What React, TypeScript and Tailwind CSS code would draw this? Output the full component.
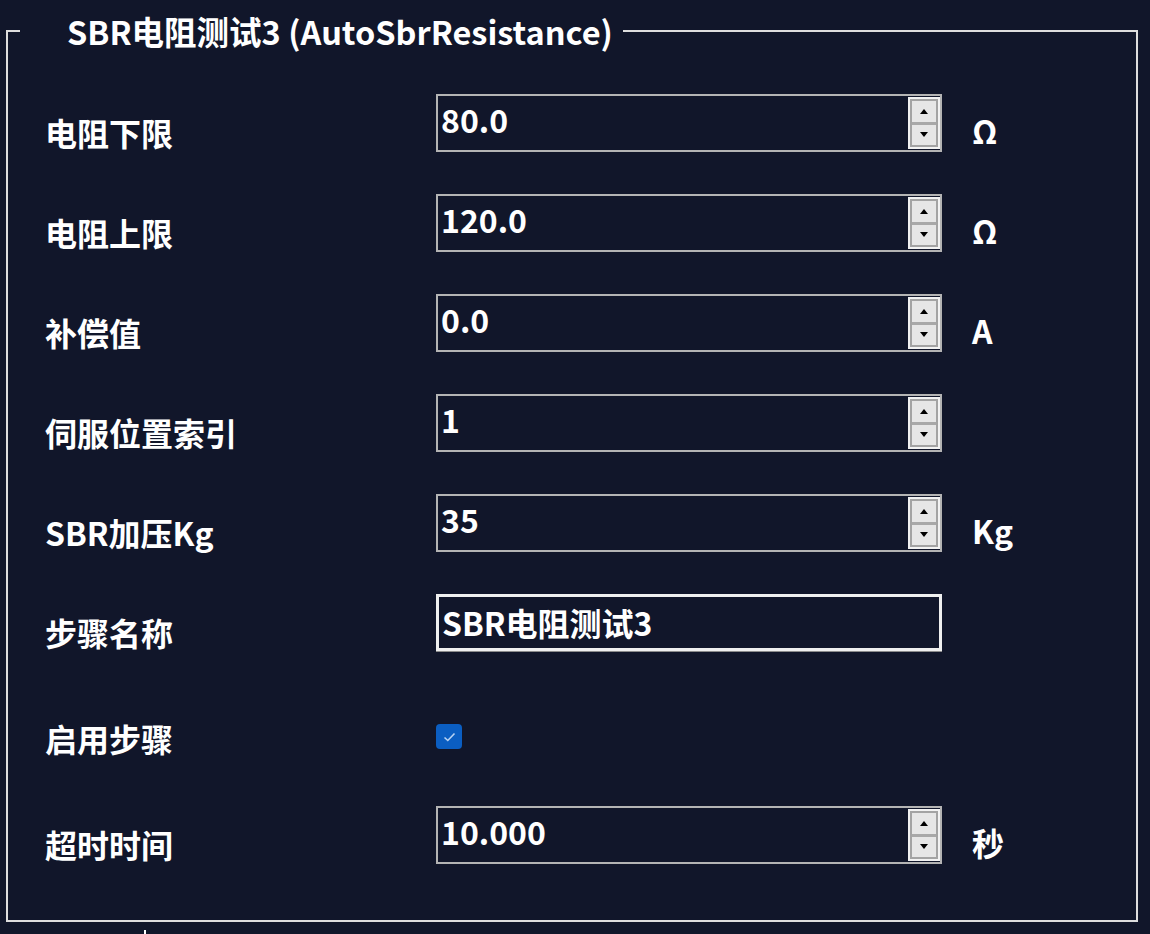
import React from "react";

const FONT = { fontFamily: '"Noto Sans CJK SC", "Noto Sans", sans-serif' };

type SpinRow = { label: string; value: string; unit?: string };

const spinRows: SpinRow[] = [
  { label: "电阻下限", value: "80.0", unit: "Ω" },
  { label: "电阻上限", value: "120.0", unit: "Ω" },
  { label: "补偿值", value: "0.0", unit: "A" },
  { label: "伺服位置索引", value: "1" },
  { label: "SBR加压Kg", value: "35", unit: "Kg" },
];

function SpinButtons() {
  return (
    <div className="my-[1px] w-[32px] shrink-0 border-2 border-[#f2f2f2] flex">
      <div className="flex-1 flex flex-col border-2 border-[#a3a3a3] bg-[#e6e6e6]">
        <div className="flex-1 flex items-center justify-center">
          <div className="w-0 h-0 border-x-[4px] border-x-transparent border-b-[5px] border-b-black" />
        </div>
        <div className="h-[3px] bg-[#a8a8a8]" />
        <div className="flex-1 flex items-center justify-center">
          <div className="w-0 h-0 border-x-[4px] border-x-transparent border-t-[5px] border-t-black" />
        </div>
      </div>
    </div>
  );
}

function SpinBox({ value }: { value: string }) {
  return (
    <div className="w-[506px] h-[58px] border-2 border-[#b4b4b4] flex">
      <div className="flex-1 pl-[3px] pt-[7px] text-[32px] leading-[32px] font-bold text-white">{value}</div>
      <SpinButtons />
    </div>
  );
}

function Label({ children }: { children: React.ReactNode }) {
  return <div className="w-[391px] shrink-0 pt-[22px] text-[32px] leading-[32px] font-bold text-white">{children}</div>;
}

function Unit({ children }: { children?: React.ReactNode }) {
  return <div className="ml-[30px] pt-[20px] text-[32px] leading-[32px] font-bold text-white">{children}</div>;
}

export default function App() {
  return (
    <div className="w-[1150px] h-[934px] bg-[#11162a] overflow-hidden" style={FONT}>
      <fieldset className="ml-[6px] mt-[13px] w-[1132px] h-[909px] border-2 border-[#dedede] p-0 m-0">
        <legend className="ml-[12px] pl-[47px] pr-[10px] text-[32.5px] leading-[36px] font-bold text-white">
          SBR电阻测试3 (AutoSbrResistance)
        </legend>
        <div className="pl-[37px] pt-[45px] flex flex-col">
          {spinRows.map((r) => (
            <div key={r.label} className="flex items-start h-[58px] mb-[42px]">
              <Label>{r.label}</Label>
              <SpinBox value={r.value} />
              <Unit>{r.unit}</Unit>
            </div>
          ))}

          <div className="flex items-start h-[57px]">
            <Label>步骤名称</Label>
            <div className="w-[506px] h-[57px] border-[3px] border-[#efefef] shadow-[0_1px_0_#8c8c8c] pl-[3px] pt-[9px] text-[32px] leading-[32px] font-bold text-white">
              SBR电阻测试3
            </div>
          </div>

          <div className="flex items-center h-[25px] mt-[73px]">
            <div className="w-[391px] shrink-0 pt-[3px] text-[32px] leading-[32px] font-bold text-white">启用步骤</div>
            <div className="w-[26px] h-[25px] rounded-[4px] bg-[#0b5ec2] flex items-center justify-center">
              <svg width="13" height="10" viewBox="0 0 13 10" fill="none">
                <path d="M1.5 5.5 L4.8 8.5 L11.5 1.5" stroke="#b9d3f3" strokeWidth="1.6" />
              </svg>
            </div>
          </div>

          <div className="flex items-start h-[58px] mt-[57px]">
            <Label>超时时间</Label>
            <SpinBox value="10.000" />
            <Unit>秒</Unit>
          </div>
        </div>
      </fieldset>
      <div className="ml-[144px] mt-[8px] w-[2px] h-[4px] bg-white" />
    </div>
  );
}
